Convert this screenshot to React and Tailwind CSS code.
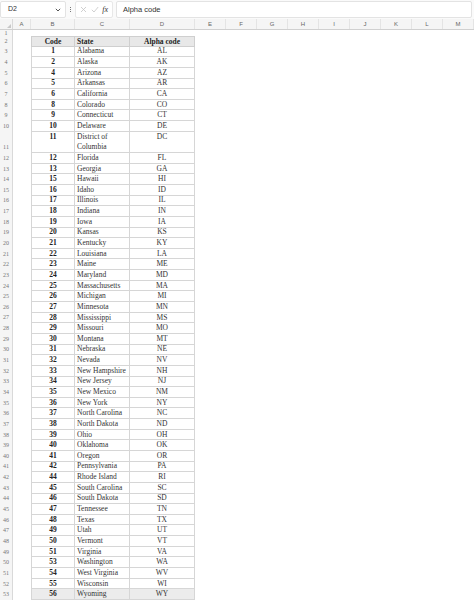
import React from 'react';

const states = [
  [1, 'Alabama', 'AL'], [2, 'Alaska', 'AK'], [4, 'Arizona', 'AZ'], [5, 'Arkansas', 'AR'],
  [6, 'California', 'CA'], [8, 'Colorado', 'CO'], [9, 'Connecticut', 'CT'], [10, 'Delaware', 'DE'],
  [11, 'District of Columbia', 'DC'], [12, 'Florida', 'FL'], [13, 'Georgia', 'GA'], [15, 'Hawaii', 'HI'],
  [16, 'Idaho', 'ID'], [17, 'Illinois', 'IL'], [18, 'Indiana', 'IN'], [19, 'Iowa', 'IA'],
  [20, 'Kansas', 'KS'], [21, 'Kentucky', 'KY'], [22, 'Louisiana', 'LA'], [23, 'Maine', 'ME'],
  [24, 'Maryland', 'MD'], [25, 'Massachusetts', 'MA'], [26, 'Michigan', 'MI'], [27, 'Minnesota', 'MN'],
  [28, 'Mississippi', 'MS'], [29, 'Missouri', 'MO'], [30, 'Montana', 'MT'], [31, 'Nebraska', 'NE'],
  [32, 'Nevada', 'NV'], [33, 'New Hampshire', 'NH'], [34, 'New Jersey', 'NJ'], [35, 'New Mexico', 'NM'],
  [36, 'New York', 'NY'], [37, 'North Carolina', 'NC'], [38, 'North Dakota', 'ND'], [39, 'Ohio', 'OH'],
  [40, 'Oklahoma', 'OK'], [41, 'Oregon', 'OR'], [42, 'Pennsylvania', 'PA'], [44, 'Rhode Island', 'RI'],
  [45, 'South Carolina', 'SC'], [46, 'South Dakota', 'SD'], [47, 'Tennessee', 'TN'], [48, 'Texas', 'TX'],
  [49, 'Utah', 'UT'], [50, 'Vermont', 'VT'], [51, 'Virginia', 'VA'], [53, 'Washington', 'WA'],
  [54, 'West Virginia', 'WV'], [55, 'Wisconsin', 'WI'], [56, 'Wyoming', 'WY'],
];

const restCols = ['E', 'F', 'G', 'H', 'I', 'J', 'K', 'L', 'M'];

const RowHead = ({ n, tall }) => (
  <div className={`w-[13px] shrink-0 bg-[#f5f5f5] border-r border-[#d9d9d9] text-[6px] text-[#777] flex justify-center ${tall ? 'items-end pb-[1px]' : 'items-center'}`}>
    {n}
  </div>
);

const App = () => {
  return (
    <div className="w-[474px] h-[601px] overflow-hidden bg-white" style={{ fontFamily: '"Liberation Sans", Arial, sans-serif' }}>
      {/* Formula bar */}
      <div className="h-[19px] flex items-center gap-[3px] pr-[2px] bg-[#fafafa]">
        <div className="w-[66px] h-[17px] bg-white border border-[#e3e3e3] rounded-[2px] flex items-center justify-between pl-[7px] pr-[4px] text-[7px] text-[#333]">
          <span>D2</span>
          <svg width="6" height="4" viewBox="0 0 6 4"><path d="M0.8 0.8 L3 3 L5.2 0.8" fill="none" stroke="#555" strokeWidth="1" /></svg>
        </div>
        <div className="flex flex-col gap-[1px] px-[1px]">
          <span className="w-[1px] h-[1px] bg-[#777]" />
          <span className="w-[1px] h-[1px] bg-[#777]" />
          <span className="w-[1px] h-[1px] bg-[#777]" />
        </div>
        <div className="w-[38px] h-[17px] bg-white border border-[#e8e8e8] rounded-[2px] flex items-center justify-around px-[2px]">
          <svg width="7" height="7" viewBox="0 0 7 7"><path d="M1 1 L6 6 M6 1 L1 6" stroke="#c4c4c4" strokeWidth="0.8" /></svg>
          <svg width="8" height="7" viewBox="0 0 8 7"><path d="M0.8 3.8 L3 6 L7.2 1" fill="none" stroke="#c4c4c4" strokeWidth="0.8" /></svg>
          <span className="text-[8px] italic text-[#333]" style={{ fontFamily: '"Liberation Serif", serif' }}>fx</span>
        </div>
        <div className="flex-1 h-[17px] bg-white border border-[#e3e3e3] rounded-[2px] flex items-center pl-[6px] text-[7.5px] text-[#333]">
          Alpha code
        </div>
      </div>

      {/* Column headers */}
      <div className="h-[11px] flex bg-[#f5f5f5] border-b border-[#d0d0d0] text-[6px] text-[#666]">
        <div className="w-[13px] shrink-0 border-r border-[#d9d9d9] flex items-end justify-end p-[1px]">
          <svg width="4" height="4" viewBox="0 0 4 4"><path d="M4 0 L4 4 L0 4 Z" fill="#c8c8c8" /></svg>
        </div>
        <div className="w-[18px] shrink-0 flex items-center justify-center border-r border-[#e4e4e4]">A</div>
        <div className="w-[44px] shrink-0 flex items-center justify-center border-r border-[#e4e4e4]">B</div>
        <div className="w-[55px] shrink-0 flex items-center justify-center border-r border-[#e4e4e4]">C</div>
        <div className="w-[65px] shrink-0 flex items-center justify-center border-r border-[#e4e4e4]">D</div>
        {restCols.map((c) => (
          <div key={c} className="w-[31px] shrink-0 flex items-center justify-center border-r border-[#e4e4e4]">{c}</div>
        ))}
      </div>

      {/* Sheet body */}
      <div style={{ fontFamily: '"Liberation Serif", "Times New Roman", serif' }}>
        <div className="h-[6px] flex">
          <RowHead n="1" />
        </div>

        {/* header row 2 */}
        <div className="h-[10.65px] flex">
          <RowHead n="2" />
          <div className="w-[18px] shrink-0" />
          <div className="w-[44px] shrink-0 bg-[#e8e8e8] border border-[#cfcfcf] flex items-center justify-center text-[7.5px] font-bold text-[#222]">Code</div>
          <div className="w-[55px] shrink-0 bg-[#e8e8e8] border-y border-r border-[#cfcfcf] flex items-center pl-[2px] text-[7.5px] font-bold text-[#222]">State</div>
          <div className="w-[65px] shrink-0 bg-[#e8e8e8] border-y border-r border-[#cfcfcf] flex items-center justify-center text-[7.5px] font-bold text-[#222]">Alpha code</div>
        </div>

        {states.map(([code, name, abbr], i) => {
          const tall = code === 11;
          const last = i === states.length - 1;
          const bg = last ? 'bg-[#ececec]' : 'bg-white';
          return (
            <div key={abbr} className={`${tall ? 'h-[21.3px]' : 'h-[10.65px]'} flex`}>
              <RowHead n={i + 3} tall={tall} />
              <div className="w-[18px] shrink-0" />
              <div className={`w-[44px] shrink-0 ${bg} border-x border-b border-[#d6d6d6] flex justify-center text-[7.5px] font-bold text-[#222] leading-[10px] ${tall ? 'items-start' : 'items-center'}`}>{code}</div>
              <div className={`w-[55px] shrink-0 ${bg} border-r border-b border-[#d6d6d6] flex pl-[2px] text-[7.5px] text-[#333] leading-[10px] ${tall ? 'items-start' : 'items-center'}`}>
                {tall ? <span className="w-[40px]">{name}</span> : name}
              </div>
              <div className={`w-[65px] shrink-0 ${bg} border-r border-b border-[#d6d6d6] flex justify-center text-[7.5px] text-[#333] leading-[10px] ${tall ? 'items-start' : 'items-center'}`}>{abbr}</div>
            </div>
          );
        })}
      </div>
    </div>
  );
};

export default App;
